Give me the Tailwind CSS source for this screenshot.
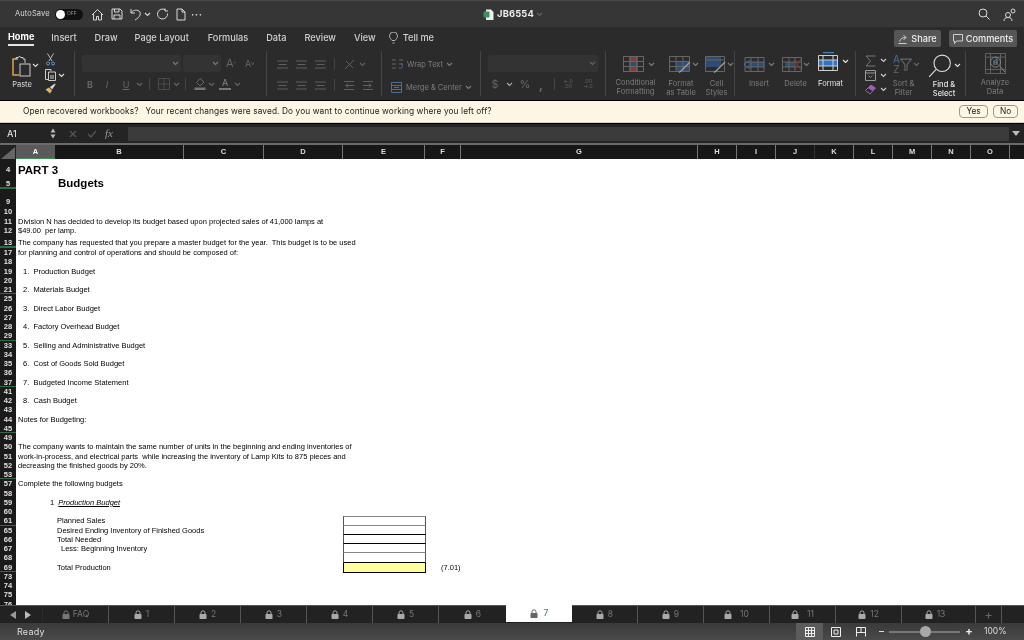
<!DOCTYPE html>
<html lang="en">
<head>
<meta charset="UTF-8">
<title>JB6554</title>
<script src="https://cdn.jsdelivr.net/npm/@tailwindcss/browser@4"></script>
</head>
<body class="bg-[#2b2b2b]">
<!-- shared icons -->
<svg class="hidden">
  <symbol id="chev" viewBox="0 0 7 5"><path d="M1 1l2.500 2.500L6 1" fill="none" stroke="currentColor" stroke-width="1.100"/></symbol>
  <symbol id="lock" viewBox="0 0 8 9"><path d="M2 4V2.800a2 2 0 0 1 4 0V4" fill="none" stroke="currentColor"/><rect x="0.500" y="4" width="7" height="5" rx="0.800" fill="currentColor"/></symbol>
  <symbol id="lines" viewBox="0 0 11 9"><path d="M0 1h11M1.500 4.500h8M0 8h11" stroke="currentColor" fill="none"/></symbol>
</svg>

<div class="w-[1024px] h-[640px] flex flex-col overflow-hidden will-change-transform font-['Inter',sans-serif]">

  <!-- title bar -->
  <div class="h-[27px] shrink-0 flex items-center bg-[#363636] border-t border-[#4a4a4a] text-[#d8d8d8]">
    <div class="w-[483px] flex items-center pl-[15px]">
      <span class="text-[7.500px] w-[40px] tracking-[0.1px]">AutoSave</span>
      <span class="w-[28px] h-[11px] rounded-full bg-[#111] flex items-center">
        <span class="w-[9px] h-[9px] rounded-full bg-white ml-[1px]"></span>
        <span class="text-[5px] text-[#999] ml-[2px]">OFF</span>
      </span>
      <svg class="w-[13px] h-[13px] ml-[8px]" viewBox="0 0 13 13" fill="none" stroke="currentColor"><path d="M1 7l5.500-5.500L12 7M2.500 6v6h3V8.500h2V12h3V6"/></svg>
      <svg class="w-[12px] h-[12px] ml-[7px]" viewBox="0 0 12 12" fill="none" stroke="currentColor"><path d="M1 1h8l2 2v8H1zM3.500 1v3h4.500V1M3 11V7h6v4"/></svg>
      <svg class="w-[12px] h-[13px] ml-[7px]" viewBox="0 0 12 13" fill="none" stroke="currentColor"><path d="M1 1v4h4M1 5c2-3 5-3.500 8-2 2.500 2 1.500 6-4 9"/></svg>
      <svg class="w-[7px] h-[5px] ml-[2px]"><use href="#chev"/></svg>
      <svg class="w-[13px] h-[13px] ml-[5px]" viewBox="0 0 13 13" fill="none" stroke="currentColor"><path d="M9.500 2a5 5 0 1 0 2 3.500M9 0.500v2.500h3"/></svg>
      <svg class="w-[10px] h-[13px] ml-[7px]" viewBox="0 0 10 13" fill="none" stroke="currentColor"><path d="M1 1h5l3 3v8H1zM6 1v3h3"/></svg>
      <span class="text-[10px] font-bold ml-[5px] leading-[8px] tracking-[0.5px]">···</span>
    </div>
    <svg class="w-[11px] h-[11px]" viewBox="0 0 11 11"><path d="M3 0.500h5l2.500 2.500v8H3z" fill="#eee"/><rect x="0.500" y="2.500" width="6" height="6" rx="1" fill="#3f8f5e"/></svg>
    <span class="text-[9.300px] font-bold text-[#eee] ml-[3px] tracking-[0.2px]">JB6554</span>
    <svg class="w-[7px] h-[5px] ml-[2px] text-[#666]"><use href="#chev"/></svg>
    <div class="ml-auto flex items-center pr-[8px] gap-[13px]">
      <svg class="w-[12px] h-[12px]" viewBox="0 0 12 12" fill="none" stroke="currentColor"><circle cx="5" cy="5" r="4"/><path d="M8 8l3.500 3.500"/></svg>
      <svg class="w-[13px] h-[13px]" viewBox="0 0 13 13" fill="none" stroke="currentColor"><circle cx="5" cy="7" r="2.500"/><path d="M1 13c0-2.500 1.500-3.500 4-3.500s4 1 4 3.500"/><circle cx="10" cy="3" r="2"/></svg>
    </div>
  </div>

  <!-- ribbon tabs -->
  <div class="h-[23px] shrink-0 flex bg-[#2b2b2b] text-[9.200px] font-medium text-[#d0d0d0] pl-[8px]">
    <div class="h-[19px] pt-[2px] border-b-2 border-[#e5e5e5] flex items-center font-bold text-white">Home</div>
    <div class="h-[19px] pt-[2px] flex items-center ml-[17px]">Insert</div>
    <div class="h-[19px] pt-[2px] flex items-center ml-[18px]">Draw</div>
    <div class="h-[19px] pt-[2px] flex items-center ml-[17px]">Page Layout</div>
    <div class="h-[19px] pt-[2px] flex items-center ml-[19px]">Formulas</div>
    <div class="h-[19px] pt-[2px] flex items-center ml-[18px]">Data</div>
    <div class="h-[19px] pt-[2px] flex items-center ml-[18px]">Review</div>
    <div class="h-[19px] pt-[2px] flex items-center ml-[18px]">View</div>
    <svg class="w-[9px] h-[12px] ml-[13px] mt-[5px]" viewBox="0 0 9 12" fill="none" stroke="currentColor" stroke-width="0.800"><path d="M3 8.500C2 7 0.500 6 0.500 4a4 4 0 0 1 8 0C8.500 6 7 7 6 8.500zM3.500 11h2"/></svg>
    <div class="h-[19px] pt-[2px] flex items-center ml-[5px]">Tell me</div>
    <div class="ml-auto flex gap-[8px] pr-[7px] pt-[3px]">
      <div class="w-[47px] h-[17px] rounded-[2px] bg-[#565656] flex items-center justify-center gap-[3px] text-[9.200px] text-[#eee]">
        <svg class="w-[10px] h-[10px]" viewBox="0 0 10 10" fill="none" stroke="currentColor" stroke-width="0.800"><path d="M0.500 9.500h8M1.500 7.500c1-3 3-4 6-4M5.500 1l2.500 2.500L5.500 6"/></svg>Share
      </div>
      <div class="w-[68px] h-[17px] rounded-[2px] bg-[#565656] flex items-center justify-center gap-[3px] text-[9.200px] text-[#eee]">
        <svg class="w-[10px] h-[10px]" viewBox="0 0 10 10" fill="none" stroke="currentColor" stroke-width="0.800"><path d="M0.500 0.500h9v6.500H3.500L1.500 9.500V7H0.500z"/></svg>Comments
      </div>
    </div>
  </div>

  <!-- ribbon -->
  <div class="h-[50px] shrink-0 flex bg-[#2b2b2b] text-[7.500px] leading-[9px] text-[#7d7d7d]">

    <!-- clipboard -->
    <div class="w-[74px] shrink-0 flex pl-[9px] text-[#ddd]">
      <div class="w-[30px] flex flex-col items-center">
        <div class="flex items-center h-[27px] pt-[4px]">
          <svg class="w-[21px] h-[22px]" viewBox="0 0 21 22" fill="none"><path d="M8 4H3v16h6" stroke="#d9a24a" stroke-width="1.500"/><path d="M6 4V2.500h2.500l1-1.500 1 1.500H13V4h2v4" stroke="#ccc"/><rect x="10" y="9" width="10" height="12" stroke="#ccc"/></svg>
          <svg class="w-[7px] h-[5px] ml-[1px]"><use href="#chev"/></svg>
        </div>
        <span class="mt-[3px] mr-[4px]">Paste</span>
      </div>
      <div class="flex flex-col pt-[3px] pl-[1px]">
        <svg class="w-[9px] h-[13px] ml-[6px]" viewBox="0 0 9 13" fill="none" stroke="#bbb"><path d="M1.500 0.500L6 8M7.500 0.500L3 8"/><circle cx="2" cy="10.500" r="1.500" stroke="#5b9bd5"/><circle cx="7" cy="10.500" r="1.500" stroke="#5b9bd5"/></svg>
        <div class="flex items-center mt-[3px] ml-[5px]">
          <svg class="w-[11px] h-[12px]" viewBox="0 0 11 12" fill="none" stroke="#ccc"><path d="M3 10.500H0.500V0.500H6V2M3.500 3h7v8.500h-7zM5 7h4M5 9h4"/></svg>
          <svg class="w-[7px] h-[5px] ml-[2px]"><use href="#chev"/></svg>
        </div>
        <svg class="w-[11px] h-[11px] mt-[2px] ml-[5px]" viewBox="0 0 11 11"><path d="M0.500 6.500L5 10.500l2-3-3-3z" fill="#e5b45a"/><path d="M5 4l5-3.500 0.500 1-3.500 5z" fill="#ddd"/></svg>
      </div>
    </div>

    <!-- font -->
    <div class="w-[192px] shrink-0 flex flex-col my-[1px] h-[45px] border-l border-[#454545] pl-[7px] pt-[4px]">
      <div class="flex items-center">
        <div class="w-[99px] h-[17px] rounded-[2px] bg-[#333] flex items-center justify-end pr-[2px]"><svg class="w-[7px] h-[5px]"><use href="#chev"/></svg></div>
        <div class="w-[38px] h-[17px] ml-[2px] rounded-[2px] bg-[#333] flex items-center justify-end pr-[2px]"><svg class="w-[7px] h-[5px]"><use href="#chev"/></svg></div>
        <span class="text-[11px] text-[#666] ml-[5px] w-[19px]">A<sup class="text-[5px] text-[#5b7fa5]">^</sup></span>
        <span class="text-[9px] text-[#666]">A<sup class="text-[5px] text-[#5b7fa5]">v</sup></span>
      </div>
      <div class="flex items-center mt-[5px] text-[#666] h-[14px]">
        <span class="w-[16px] text-center font-bold text-[9px]">B</span>
        <span class="w-[18px] text-center italic text-[9px]">I</span>
        <span class="w-[20px] text-center underline text-[9px]">U</span>
        <svg class="w-[7px] h-[5px]"><use href="#chev"/></svg>
        <span class="w-px h-[12px] bg-[#454545] ml-[6px]"></span>
        <svg class="w-[12px] h-[12px] ml-[8px]" viewBox="0 0 12 12" fill="none" stroke="currentColor" stroke-dasharray="1 1"><path d="M0.500 0.500h11v11h-11zM6 0.500v11M0.500 6h11"/></svg>
        <svg class="w-[7px] h-[5px] ml-[3px]"><use href="#chev"/></svg>
        <span class="w-px h-[12px] bg-[#454545] ml-[5px]"></span>
        <svg class="w-[12px] h-[12px] ml-[8px]" viewBox="0 0 12 12"><path d="M6 0.500L10 4 6 8 2.500 4.500z" fill="none" stroke="currentColor"/><rect x="0.500" y="9.500" width="11" height="2.500" fill="#777"/></svg>
        <svg class="w-[7px] h-[5px] ml-[2px]"><use href="#chev"/></svg>
        <span class="w-[12px] ml-[4px] text-[9px] text-center border-b-2 border-[#777] leading-[10px] text-[#888]">A</span>
        <svg class="w-[7px] h-[5px] ml-[3px]"><use href="#chev"/></svg>
      </div>
    </div>

    <!-- alignment -->
    <div class="w-[115px] shrink-0 flex flex-col my-[1px] h-[45px] border-l border-[#454545] pl-[10px] pt-[6px] text-[#5f5f5f]">
      <div class="flex items-center h-[14px]">
        <svg class="w-[11px] h-[9px]"><use href="#lines"/></svg>
        <svg class="w-[11px] h-[9px] ml-[8px]"><use href="#lines"/></svg>
        <svg class="w-[11px] h-[9px] ml-[8px]"><use href="#lines"/></svg>
        <span class="w-px h-[12px] bg-[#454545] ml-[8px]"></span>
        <svg class="w-[12px] h-[11px] ml-[9px]" viewBox="0 0 12 11" fill="none" stroke="currentColor"><path d="M1 10L10 1M2 2l7 7"/></svg>
        <svg class="w-[7px] h-[5px] ml-[3px]"><use href="#chev"/></svg>
      </div>
      <div class="flex items-center h-[14px] mt-[7px]">
        <svg class="w-[11px] h-[9px]"><use href="#lines"/></svg>
        <svg class="w-[11px] h-[9px] ml-[8px]"><use href="#lines"/></svg>
        <svg class="w-[11px] h-[9px] ml-[8px]"><use href="#lines"/></svg>
        <span class="w-px h-[12px] bg-[#454545] ml-[8px]"></span>
        <svg class="w-[10px] h-[9px] ml-[9px]" viewBox="0 0 10 9" fill="none" stroke="currentColor"><path d="M0 0.500h10M0 8.500h10M10 4.500H2"/><path d="M4 2.500L2 4.500l2 2" stroke="#4d6f94"/></svg>
        <svg class="w-[10px] h-[9px] ml-[9px]" viewBox="0 0 10 9" fill="none" stroke="currentColor"><path d="M0 0.500h10M0 8.500h10M0 4.500h8"/><path d="M6 2.500l2 2-2 2" stroke="#4d6f94"/></svg>
      </div>
    </div>

    <!-- wrap and merge -->
    <div class="w-[99px] shrink-0 flex flex-col my-[1px] h-[45px] border-l border-[#454545] pl-[10px] pt-[6px]">
      <div class="flex items-center h-[14px]">
        <svg class="w-[11px] h-[11px]" viewBox="0 0 11 11" fill="none" stroke="#666"><path d="M0 1h4M7 1h4M0 5h4M7 5h4M0 9h4"/><path d="M7 9h2c2 0 2-4 0-4" stroke="#4d6f94"/></svg>
        <span class="ml-[4px]">Wrap Text</span>
        <svg class="w-[7px] h-[5px] ml-[3px]"><use href="#chev"/></svg>
      </div>
      <div class="flex items-center h-[14px] mt-[9px]">
        <svg class="w-[11px] h-[11px] -ml-px" viewBox="0 0 11 11" fill="none" stroke="#4d6f94"><path d="M0.500 0.500h10v10h-10zM0.500 3.500h10M0.500 7.500h10M3 5.500h5"/></svg>
        <span class="ml-[4px] whitespace-nowrap">Merge &amp; Center</span>
        <svg class="w-[7px] h-[5px] ml-[3px]"><use href="#chev"/></svg>
      </div>
    </div>

    <!-- number -->
    <div class="w-[125px] shrink-0 flex flex-col my-[1px] h-[45px] border-l border-[#454545] pl-[7px] pt-[4px] text-[#666]">
      <div class="w-[110px] h-[17px] rounded-[2px] bg-[#333] flex items-center justify-end pr-[2px]"><svg class="w-[7px] h-[5px]"><use href="#chev"/></svg></div>
      <div class="flex items-center mt-[5px] h-[14px]">
        <span class="w-[14px] text-center text-[11px]">$</span>
        <svg class="w-[7px] h-[5px] ml-[4px] text-[#aaa]"><use href="#chev"/></svg>
        <span class="w-[14px] ml-[5px] text-center text-[11px]">%</span>
        <span class="w-[10px] ml-[4px] text-center text-[13px] font-bold leading-[10px]">,</span>
        <span class="w-px h-[12px] bg-[#454545] ml-[8px]"></span>
        <span class="w-[14px] ml-[6px] text-[5px] leading-[5px] text-center">&larr;.0<br>.00</span>
        <span class="w-[14px] ml-[6px] text-[5px] leading-[5px] text-center">.00<br>&rarr;.0</span>
      </div>
    </div>

    <!-- styles -->
    <div class="w-[129px] shrink-0 flex my-[1px] h-[45px] border-l border-[#454545] text-center pt-[5px]">
      <div class="w-[58px] flex flex-col items-center">
        <div class="flex items-center h-[17px] ml-[8px]">
          <svg class="w-[21px] h-[16px]" viewBox="0 0 21 16" fill="none" stroke="#666"><rect x="7" y="0.500" width="7" height="5" fill="#8a3a3a"/><rect x="7" y="5.500" width="7" height="5" fill="#2f4d72"/><rect x="7" y="10.500" width="7" height="5" fill="#8a3a3a"/><path d="M0.500 0.500h20v15h-20zM7 0.500v15M14 0.500v15M0.500 5.500h20M0.500 10.500h20"/></svg>
          <svg class="w-[7px] h-[5px] ml-[4px]"><use href="#chev"/></svg>
        </div>
        <span class="mt-[6px] mr-[-2px]">Conditional<br>Formatting</span>
      </div>
      <div class="w-[36px] flex flex-col items-center">
        <div class="flex items-center h-[17px] ml-[6px]">
          <svg class="w-[22px] h-[17px]" viewBox="0 0 22 17" fill="none" stroke="#666"><rect x="7" y="5.500" width="13" height="10" fill="#2f4d72" stroke="none"/><path d="M0.500 0.500h20v15h-20zM7 0.500v15M14 0.500v15M0.500 5.500h20M0.500 10.500h20"/><path d="M21 6L13 14l-3 2.500" stroke="#999" stroke-width="1.500"/></svg>
          <svg class="w-[7px] h-[5px] ml-[1px]"><use href="#chev"/></svg>
        </div>
        <span class="mt-[6px] whitespace-nowrap">Format<br>as Table</span>
      </div>
      <div class="w-[35px] flex flex-col items-center">
        <div class="flex items-center h-[17px] ml-[6px]">
          <svg class="w-[21px] h-[17px]" viewBox="0 0 21 17" fill="none" stroke="#666"><rect x="1" y="1" width="15" height="10" fill="#2f4d72" stroke="none"/><path d="M0.500 0.500h19v15h-19zM0.500 4h19"/><path d="M20 6L12 14l-3 2.500" stroke="#999" stroke-width="1.500"/></svg>
          <svg class="w-[7px] h-[5px] ml-[1px]"><use href="#chev"/></svg>
        </div>
        <span class="mt-[6px]">Cell<br>Styles</span>
      </div>
    </div>

    <!-- cells -->
    <div class="w-[121px] shrink-0 flex my-[1px] h-[45px] border-l border-[#454545] text-center pt-[5px]">
      <div class="w-[40px] flex flex-col items-center pl-[8px]">
        <div class="flex items-center h-[17px]">
          <svg class="w-[22px] h-[15px]" viewBox="0 0 22 15" fill="none" stroke="#666"><rect x="5" y="5" width="17" height="5" fill="#2f4d72" stroke="none"/><path d="M2 0.500h19v14H2zM8 0.500v14M15 0.500v14M2 5h19M2 10h19"/><path d="M7 3L1 7.500l6 4.500" stroke="#4d6f94"/></svg>
          <svg class="w-[7px] h-[5px] ml-[3px]"><use href="#chev"/></svg>
        </div>
        <span class="mt-[6px]">Insert</span>
      </div>
      <div class="w-[37px] flex flex-col items-center pl-[4px]">
        <div class="flex items-center h-[17px]">
          <svg class="w-[20px] h-[15px]" viewBox="0 0 20 15" fill="none" stroke="#666"><rect x="3" y="5" width="9" height="5" fill="#2f4d72" stroke="none"/><path d="M0.500 0.500h19v14H0.500zM7 0.500v14M13 0.500v14M0.500 5h19M0.500 10h19"/><path d="M12 2l7 11M19 2L12 13" stroke="#8a3a3a"/></svg>
          <svg class="w-[7px] h-[5px] ml-[1px]"><use href="#chev"/></svg>
        </div>
        <span class="mt-[6px]">Delete</span>
      </div>
      <div class="w-[37px] flex flex-col items-center text-[#e5e5e5]">
        <div class="flex items-center h-[17px] mt-[-3px] pl-[6px]">
          <svg class="w-[20px] h-[20px]" viewBox="0 0 20 20" fill="none" stroke="#cfcfcf"><path d="M5 0.700h11" stroke="#4f93e0"/><rect x="0.500" y="8" width="19" height="6" fill="#2f74c8" stroke="none"/><path d="M0.500 3.500h19v15H0.500zM0.500 8h19M0.500 14h19M5 3.500v15M15 3.500v15"/></svg>
          <svg class="w-[7px] h-[5px] ml-[4px]"><use href="#chev"/></svg>
        </div>
        <span class="mt-[9px]">Format</span>
      </div>
    </div>

    <!-- editing -->
    <div class="w-[110px] shrink-0 flex my-[1px] h-[45px] border-l border-[#454545] text-center pt-[3px]">
      <div class="w-[34px] flex flex-col pl-[9px] text-[#ccc]">
        <div class="flex items-center h-[15px]">
          <svg class="w-[11px] h-[12px]" viewBox="0 0 11 12" fill="none" stroke="#777"><path d="M10.500 1H1l4.500 5L1 11h9.500"/></svg>
          <svg class="w-[7px] h-[5px] ml-[4px]"><use href="#chev"/></svg>
        </div>
        <div class="flex items-center h-[15px] mt-[1px]">
          <svg class="w-[11px] h-[11px]" viewBox="0 0 11 11" fill="none" stroke="#999"><path d="M0.500 0.500h10v10h-10zM0.500 3h10"/><path d="M3.500 5.500l2 2 2-2" stroke="#4f93e0"/></svg>
          <svg class="w-[7px] h-[5px] ml-[4px]"><use href="#chev"/></svg>
        </div>
        <div class="flex items-center h-[15px]">
          <svg class="w-[11px] h-[11px]" viewBox="0 0 11 11"><path d="M0.500 6.500L6 1l4.500 3L5 10z" fill="none" stroke="#a05cc0"/><path d="M3 4L6 1l4.500 3-3 3z" fill="#a05cc0"/></svg>
          <svg class="w-[7px] h-[5px] ml-[4px]"><use href="#chev"/></svg>
        </div>
      </div>
      <div class="w-[33px] flex flex-col items-center">
        <div class="flex items-center h-[23px] text-[#666]">
          <span class="text-[10px] leading-[10px] text-[#4d6f94]">A<br><span class="text-[#666]">Z</span></span>
          <svg class="w-[12px] h-[13px]" viewBox="0 0 11 12" fill="none" stroke="#666"><path d="M0.500 1h10L6.500 6v5l-2 0.500V6z"/></svg>
          <svg class="w-[7px] h-[5px] ml-[1px]"><use href="#chev"/></svg>
        </div>
        <span class="mt-[5px] mr-[6px] whitespace-nowrap">Sort &amp;<br>Filter</span>
      </div>
      <div class="w-[42px] flex flex-col items-center text-[#e5e5e5]">
        <div class="flex items-center h-[23px]">
          <svg class="w-[24px] h-[24px] ml-[1px]" viewBox="0 0 21 22" fill="none" stroke="#ddd"><circle cx="12.500" cy="8.500" r="7.500"/><path d="M7 14L0.500 21"/></svg>
          <svg class="w-[7px] h-[5px] ml-[2px]"><use href="#chev"/></svg>
        </div>
        <span class="mt-[3px] font-medium whitespace-nowrap">Find &amp;<br>Select</span>
      </div>
    </div>

    <!-- analyze -->
    <div class="flex-1 flex flex-col items-center my-[1px] h-[45px] border-l border-[#454545] pt-[2px]">
      <svg class="w-[23px] h-[23px]" viewBox="0 0 23 23" fill="none" stroke="#666"><path d="M0.500 0.500h22v22h-22zM0.500 4.500h22M6 0.500v22M17 0.500v22M0.500 18h22"/><rect x="9" y="8" width="2" height="5" fill="#666" stroke="none"/><rect x="11.500" y="6" width="2.500" height="7" fill="#4d6f94" stroke="none"/><circle cx="11.500" cy="10" r="5.500" fill="none" stroke="#888"/><path d="M16 14l6 7" stroke="#888"/></svg>
      <span class="text-center mt-[4px]">Analyze<br>Data</span>
    </div>
  </div>
  <div class="h-px shrink-0 bg-black"></div>

  <!-- recovery message -->
  <div class="h-[22px] shrink-0 flex items-center bg-[#fdf6e4] border-b border-[#d8d2c0] pl-[23px] pr-[6px] text-[8.300px] text-[#222]">
    <span class="tracking-[0.1px]">Open recovered workbooks?</span>
    <span class="ml-[7px] tracking-[0.1px]">Your recent changes were saved. Do you want to continue working where you left off?</span>
    <span class="ml-auto w-[29px] h-[13px] rounded-[4px] border border-[#999] flex items-center justify-center">Yes</span>
    <span class="ml-[5px] w-[25px] h-[13px] rounded-[4px] border border-[#999] flex items-center justify-center">No</span>
  </div>

  <!-- formula bar -->
  <div class="h-[20px] shrink-0 flex items-center bg-[#242424] border-t border-black text-[#777]">
    <span class="w-[50px] pl-[7px] text-[9px] font-medium text-[#ddd]">A1</span>
    <svg class="w-[6px] h-[11px] text-[#bbb]" viewBox="0 0 6 11" fill="currentColor"><path d="M3 0.500l2.500 4h-5zM3 10.500l2.500-4h-5z"/></svg>
    <svg class="w-[8px] h-[8px] ml-[13px] text-[#555]" viewBox="0 0 8 8" fill="none" stroke="currentColor" stroke-width="1.300"><path d="M1 1l6 6M7 1L1 7"/></svg>
    <svg class="w-[10px] h-[8px] ml-[10px] text-[#555]" viewBox="0 0 10 8" fill="none" stroke="currentColor" stroke-width="1.300"><path d="M1 4l3 3 5-6"/></svg>
    <span class="w-[23px] ml-[8px] font-['Liberation_Serif',serif] italic text-[11px] text-[#999]">fx</span>
    <div class="w-[881px] h-[14px] bg-[#3b3b3b] rounded-[1px]"></div>
    <svg class="w-[8px] h-[5px] ml-[3px] text-[#bbb]" viewBox="0 0 8 5" fill="currentColor"><path d="M0 0h8L4 5z"/></svg>
  </div>
  <div class="h-[2px] shrink-0 bg-[#6a6a6a]"></div>

  <!-- column headers -->
  <div class="h-[14px] shrink-0 flex bg-[#171717] font-['Liberation_Sans',sans-serif] text-[7.500px] font-bold leading-[14px] text-center text-[#ddd]">
    <div class="w-[16px] shrink-0 bg-[#222] flex items-end">
      <svg class="w-[14px] h-[12px] ml-[1px]" viewBox="0 0 14 12"><path d="M14 0v12H0z" fill="#666"/></svg>
    </div>
    <div class="w-[39px] bg-[#5a5a5a] border-b border-[#3f8f5e] text-white">A</div>
    <div class="w-[129px] border-r border-[#777]">B</div>
    <div class="w-[80px] border-r border-[#777]">C</div>
    <div class="w-[79px] border-r border-[#777]">D</div>
    <div class="w-[82px] border-r border-[#777]">E</div>
    <div class="w-[36px] border-r border-[#777]">F</div>
    <div class="w-[237px] border-r border-[#777]">G</div>
    <div class="w-[39px] border-r border-[#777]">H</div>
    <div class="w-[39px] border-r border-[#777]">I</div>
    <div class="w-[39px] border-r border-[#333]">J</div>
    <div class="w-[39px] border-r border-[#777]">K</div>
    <div class="w-[39px] border-r border-[#777]">L</div>
    <div class="w-[39px] border-r border-[#777]">M</div>
    <div class="w-[39px] border-r border-[#777]">N</div>
    <div class="w-[39px] border-r border-[#777]">O</div>
  </div>

  <!-- sheet -->
  <div class="h-[446px] shrink-0 overflow-hidden flex bg-white font-['Liberation_Sans',sans-serif] text-[7.500px] leading-[9.250px] text-black">
    <!-- row numbers -->
    <div class="w-[16px] shrink-0 bg-[#1a1a1a] text-[#e0e0e0] font-bold text-center text-[7.500px]">
      <div class="h-[18px] leading-[21px]">4</div>
      <div class="h-[12px] leading-[13px] border-b-2 border-[#2f6b45]">5</div>
      <div class="h-[18px] leading-[26px]">9</div>
      <div class="h-[9.500px]">10</div>
      <div class="h-[9.250px]">11</div>
      <div class="h-[9.250px]">12</div>
      <div class="h-[13px] leading-[16px] border-b-2 border-[#2f6b45]">13</div>
      <div class="h-[9.250px]">17</div>
      <div class="h-[9.250px]">18</div>
      <div class="h-[9.250px]">19</div>
      <div class="h-[9.250px]">20</div>
      <div class="h-[9.250px] border-b border-[#2f6b45]">21</div>
      <div class="h-[9.250px]">25</div>
      <div class="h-[9.250px]">26</div>
      <div class="h-[9.250px]">27</div>
      <div class="h-[9.250px]">28</div>
      <div class="h-[9.250px] border-b border-[#2f6b45]">29</div>
      <div class="h-[9.250px]">33</div>
      <div class="h-[9.250px]">34</div>
      <div class="h-[9.250px]">35</div>
      <div class="h-[9.250px]">36</div>
      <div class="h-[9.250px] border-b border-[#2f6b45]">37</div>
      <div class="h-[9.250px]">41</div>
      <div class="h-[9.250px]">42</div>
      <div class="h-[9.250px]">43</div>
      <div class="h-[9.250px]">44</div>
      <div class="h-[9.250px] border-b border-[#2f6b45]">45</div>
      <div class="h-[9.250px]">49</div>
      <div class="h-[9.250px]">50</div>
      <div class="h-[9.250px]">51</div>
      <div class="h-[9.250px]">52</div>
      <div class="h-[9.250px] border-b border-[#2f6b45]">53</div>
      <div class="h-[9.250px]">57</div>
      <div class="h-[9.250px]">58</div>
      <div class="h-[9.250px]">59</div>
      <div class="h-[9.250px]">60</div>
      <div class="h-[9.250px] border-b border-[#2f6b45]">61</div>
      <div class="h-[9.250px]">65</div>
      <div class="h-[9.250px]">66</div>
      <div class="h-[9.250px]">67</div>
      <div class="h-[9.250px]">68</div>
      <div class="h-[9.250px] border-b border-[#2f6b45]">69</div>
      <div class="h-[9.250px]">73</div>
      <div class="h-[9.250px]">74</div>
      <div class="h-[9.250px]">75</div>
      <div class="h-[9.250px]">76</div>
    </div>

    <!-- cells -->
    <div class="flex-1 whitespace-nowrap">
      <div class="h-[18px] pl-[2px] pt-[5px] text-[11.500px] font-bold leading-[12px]">PART 3</div>
      <div class="h-[12px] pl-[42px] text-[11.500px] font-bold leading-[12px]">Budgets</div>
      <div class="h-[18px]"></div>
      <div class="h-[9.500px]"></div>
      <div class="h-[9.250px] pl-[2px]">Division N has decided to develop its budget based upon projected sales of 41,000 lamps at</div>
      <div class="h-[9.250px] pl-[2px]">$49.00&nbsp; per lamp.</div>
      <div class="h-[13px] pl-[2px] pt-[3px]">The company has requested that you prepare a master budget for the year.&nbsp; This budget is to be used</div>
      <div class="h-[9.250px] pl-[2px]">for planning and control of operations and should be composed of:</div>
      <div class="h-[9.250px]"></div>
      <div class="h-[9.250px] pl-[7px]">1.&nbsp; Production Budget</div>
      <div class="h-[9.250px]"></div>
      <div class="h-[9.250px] pl-[7px]">2.&nbsp; Materials Budget</div>
      <div class="h-[9.250px]"></div>
      <div class="h-[9.250px] pl-[7px]">3.&nbsp; Direct Labor Budget</div>
      <div class="h-[9.250px]"></div>
      <div class="h-[9.250px] pl-[7px]">4.&nbsp; Factory Overhead Budget</div>
      <div class="h-[9.250px]"></div>
      <div class="h-[9.250px] pl-[7px]">5.&nbsp; Selling and Administrative Budget</div>
      <div class="h-[9.250px]"></div>
      <div class="h-[9.250px] pl-[7px]">6.&nbsp; Cost of Goods Sold Budget</div>
      <div class="h-[9.250px]"></div>
      <div class="h-[9.250px] pl-[7px]">7.&nbsp; Budgeted Income Statement</div>
      <div class="h-[9.250px]"></div>
      <div class="h-[9.250px] pl-[7px]">8.&nbsp; Cash Budget</div>
      <div class="h-[9.250px]"></div>
      <div class="h-[9.250px] pl-[2px]">Notes for Budgeting:</div>
      <div class="h-[9.250px]"></div>
      <div class="h-[9.250px]"></div>
      <div class="h-[9.250px] pl-[2px]">The company wants to maintain the same number of units in the beginning and ending inventories of</div>
      <div class="h-[9.250px] pl-[2px]">work-in-process, and electrical parts&nbsp; while increasing the inventory of Lamp Kits to 875 pieces and</div>
      <div class="h-[9.250px] pl-[2px]">decreasing the finished goods by 20%.</div>
      <div class="h-[9.250px]"></div>
      <div class="h-[9.250px] pl-[2px]">Complete the following budgets</div>
      <div class="h-[9.250px]"></div>
      <div class="h-[9.250px] pl-[34px]">1&nbsp; <span class="italic underline">Production Budget</span></div>
      <div class="h-[9.250px]"></div>
      <!-- budget rows with the answer cells in column E -->
      <div class="h-[9.250px] flex"><span class="w-[327px] pl-[41px]">Planned Sales</span><span class="w-[83px] border-x border-t border-b border-x-[#555] border-t-[#888] border-b-[#888]"></span></div>
      <div class="h-[9.250px] flex"><span class="w-[327px] pl-[41px]">Desired Ending Inventory of Finished Goods</span><span class="w-[83px] border-x border-b border-x-[#555] border-b-black"></span></div>
      <div class="h-[9.250px] flex"><span class="w-[327px] pl-[41px]">Total Needed</span><span class="w-[83px] border-x border-b border-x-[#555] border-b-black"></span></div>
      <div class="h-[9.250px] flex"><span class="w-[327px] pl-[45px]">Less: Beginning Inventory</span><span class="w-[83px] border-x border-b border-x-[#555] border-b-[#888]"></span></div>
      <div class="h-[9.250px] flex"><span class="w-[327px]"></span><span class="w-[83px] border-x border-b border-x-[#555] border-b-black"></span></div>
      <div class="h-[10px] flex"><span class="w-[327px] pl-[41px]">Total Production</span><span class="w-[83px] bg-[#ffff99] border-x border-b border-x-black border-b-black"></span><span class="ml-[15px]">(7.01)</span></div>
    </div>
  </div>

  <!-- sheet tabs -->
  <div class="h-[18px] shrink-0 flex bg-[#222] border-t border-[#555] text-[8.500px] text-[#777] items-stretch">
    <div class="w-[43px] flex items-center pl-[10px] gap-[9px] border-r border-[#2c2c2c]">
      <svg class="w-[6px] h-[8px] text-[#999]" viewBox="0 0 6 8" fill="currentColor"><path d="M6 0v8L0 4z"/></svg>
      <svg class="w-[6px] h-[8px] text-[#bbb]" viewBox="0 0 6 8" fill="currentColor"><path d="M0 0v8l6-4z"/></svg>
    </div>
    <div class="w-[66px] flex items-center justify-center gap-[3px] border-r border-[#555]"><svg class="w-[8px] h-[9px]"><use href="#lock"/></svg>FAQ</div>
    <div class="w-[66px] flex items-center justify-center gap-[4px] border-r border-[#555]"><svg class="w-[8px] h-[9px] text-[#aaa]"><use href="#lock"/></svg>1</div>
    <div class="w-[66px] flex items-center justify-center gap-[4px] border-r border-[#555]"><svg class="w-[8px] h-[9px] text-[#aaa]"><use href="#lock"/></svg>2</div>
    <div class="w-[66px] flex items-center justify-center gap-[4px] border-r border-[#555]"><svg class="w-[8px] h-[9px] text-[#aaa]"><use href="#lock"/></svg>3</div>
    <div class="w-[66px] flex items-center justify-center gap-[4px] border-r border-[#555]"><svg class="w-[8px] h-[9px] text-[#aaa]"><use href="#lock"/></svg>4</div>
    <div class="w-[66px] flex items-center justify-center gap-[4px] border-r border-[#555]"><svg class="w-[8px] h-[9px] text-[#aaa]"><use href="#lock"/></svg>5</div>
    <div class="w-[67px] flex items-center justify-center gap-[4px]"><svg class="w-[8px] h-[9px] text-[#aaa]"><use href="#lock"/></svg>6</div>
    <div class="w-[66px] -mt-px flex items-center justify-center gap-[6px] bg-white text-[#3f8f5e] border-b border-[#222] font-medium"><svg class="w-[8px] h-[9px] text-[#666]"><use href="#lock"/></svg>7</div>
    <div class="w-[66px] flex items-center justify-center gap-[4px] border-r border-[#555]"><svg class="w-[8px] h-[9px] text-[#aaa]"><use href="#lock"/></svg>8</div>
    <div class="w-[66px] flex items-center justify-center gap-[4px] border-r border-[#555]"><svg class="w-[8px] h-[9px] text-[#aaa]"><use href="#lock"/></svg>9</div>
    <div class="w-[66px] flex items-center justify-center gap-[8px] border-r border-[#555]"><svg class="w-[8px] h-[9px] text-[#aaa]"><use href="#lock"/></svg>10</div>
    <div class="w-[66px] flex items-center justify-center gap-[8px] border-r border-[#555]"><svg class="w-[8px] h-[9px] text-[#aaa]"><use href="#lock"/></svg>11</div>
    <div class="w-[66px] flex items-center justify-center gap-[4px] border-r border-[#555]"><svg class="w-[8px] h-[9px] text-[#aaa]"><use href="#lock"/></svg>12</div>
    <div class="w-[66px] flex items-center justify-center gap-[4px]"><svg class="w-[8px] h-[9px] text-[#aaa]"><use href="#lock"/></svg>13</div>
    <div class="w-[7px]"></div>
    <div class="w-[27px] flex items-center justify-center border-x border-[#555] text-[13px] text-[#666]">+</div>
  </div>

  <!-- status bar -->
  <div class="h-[17px] shrink-0 flex items-center bg-gradient-to-b from-[#3a3a3a] to-[#4a4a4a] text-[9px] text-[#ddd]">
    <span class="pl-[17px] tracking-[0.2px]">Ready</span>
    <div class="ml-auto flex items-center h-full">
      <div class="w-[27px] h-full bg-[#5c5c5c] flex items-center justify-center">
        <svg class="w-[10px] h-[10px]" viewBox="0 0 10 10" fill="none" stroke="#eee"><path d="M0.500 0.500h9v9h-9zM3.500 0.500v9M6.500 0.500v9M0.500 3.500h9M0.500 6.500h9"/></svg>
      </div>
      <svg class="w-[10px] h-[10px] ml-[8px]" viewBox="0 0 10 10" fill="none" stroke="#eee"><path d="M0.500 0.500h9v9h-9zM3 3h4v4H3z"/></svg>
      <svg class="w-[10px] h-[10px] ml-[15px]" viewBox="0 0 10 10" fill="none" stroke="#eee"><path d="M0.500 9.500v-9h9v9M5 0.500v5H0.500M5 5.500h4.500"/></svg>
      <span class="w-[5px] h-[1.500px] bg-[#ddd] ml-[13px]"></span>
      <div class="w-[71px] h-[2px] bg-[#777] ml-[5px] flex items-center pl-[31px]"><span class="w-[11px] h-[11px] rounded-full bg-[#a8a8a8] shrink-0"></span></div>
      <span class="text-[11px] font-bold ml-[4px] w-[10px] text-center text-[#eee]">+</span>
      <span class="w-[50px] pl-[10px] text-[8.500px]">100%</span>
    </div>
  </div>
</div>
</body>
</html>
